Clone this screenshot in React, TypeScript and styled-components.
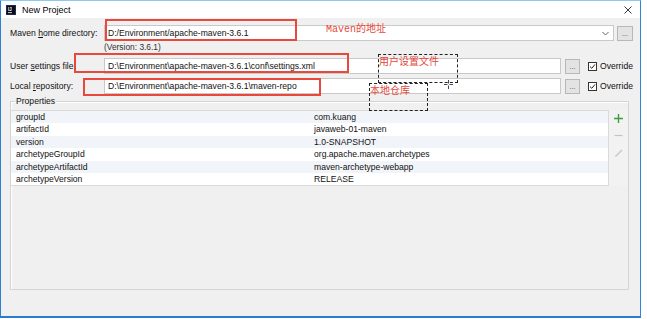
import React from "react";
import styled, { createGlobalStyle } from "styled-components";

const Global = createGlobalStyle`
  html, body { margin: 0; padding: 0; background: #ffffff; }
  body { font-family: "Liberation Sans", Arial, sans-serif; }
  * { box-sizing: border-box; }
`;

const UI = `"Liberation Sans", "Noto Sans CJK SC", Arial, sans-serif`;

const Window = styled.div`
  position: relative;
  width: 641px;
  height: 318px;
  border-left: 1px solid #2f7fd4;
  border-right: 1px solid #2f86d8;
  border-bottom: 2px solid #2a7ccc;
  border-top: 1px solid #8ccaf2;
  display: flex;
  flex-direction: column;
  background: #f0f0f0;
  font-family: ${UI};
  font-size: 8.6px;
  color: #111;
`;

const TitleBar = styled.div`
  height: 17px;
  flex: none;
  background: #ffffff;
  display: flex;
  align-items: center;
  padding: 0 8px 0 5px;
  gap: 6px;
`;

const TitleText = styled.span`
  font-size: 9px;
  color: #000;
  flex: 1;
`;

const CloseGlyph = styled.svg`
  width: 8px;
  height: 8px;
`;

const Body = styled.div`
  flex: 1;
  display: flex;
  flex-direction: column;
  padding: 7px 7px 0 9px;
`;

const FieldRow = styled.div<{ $h?: number; $mb?: number }>`
  display: grid;
  grid-template-columns: 94px 1fr;
  align-items: center;
  height: ${(p) => p.$h ?? 16}px;
  margin-bottom: ${(p) => p.$mb ?? 0}px;
`;

const Label = styled.span`
  white-space: nowrap;
  color: #111;
`;

const U = styled.span`
  text-decoration: underline;
`;

const Controls = styled.div`
  display: flex;
  align-items: center;
  height: 16px;
`;

const Input = styled.div<{ $w?: number }>`
  height: 16px;
  ${(p) => (p.$w ? `width: ${p.$w}px;` : "flex: 1;")}
  background: #fff;
  border: 1px solid #c9c9c9;
  display: flex;
  align-items: center;
  padding: 0 3px;
  white-space: nowrap;
  overflow: hidden;
  color: #111;
`;

const InputText = styled.span`
  flex: 1;
`;

const Chevron = styled.svg`
  width: 7px;
  height: 5px;
  flex: none;
  margin-right: 1px;
`;

const DotsButton = styled.div<{ $ml: number; $w: number }>`
  margin-left: ${(p) => p.$ml}px;
  width: ${(p) => p.$w}px;
  height: 15px;
  background: #e3e3e3;
  border: 1px solid #b8b8b8;
  display: flex;
  align-items: flex-end;
  justify-content: center;
  padding-bottom: 3px;
  font-size: 7px;
  line-height: 7px;
  color: #444;
  flex: none;
`;

const Check = styled.div`
  margin-left: 8px;
  display: flex;
  align-items: center;
  gap: 3px;
  flex: none;
`;

const Box = styled.svg`
  width: 9px;
  height: 9px;
`;

const Version = styled.span`
  grid-column: 2;
  color: #333;
  font-size: 8.4px;
  line-height: 12px;
  align-self: start;
`;

const Group = styled.fieldset`
  position: relative;
  margin: 7px 4px 0 0;
  height: 189px;
  border: 1px solid #d4d4d4;
  box-shadow: inset 1px 1px 0 #fff;
  padding: 8px 0 1px 0;
  display: flex;
  min-width: 0;
`;

const Legend = styled.span`
  position: absolute;
  left: 4px;
  top: -6px;
  background: #f0f0f0;
  padding: 0 1px;
  line-height: 11px;
  color: #111;
`;

const Table = styled.div`
  flex: 1;
  background: #fff;
  border: 1px solid #dadada;
  border-left: none;
  display: flex;
  flex-direction: column;
`;

const TRow = styled.div<{ $alt: boolean }>`
  display: grid;
  grid-template-columns: 298px 1fr;
  height: 12.4px;
  line-height: 12.4px;
  padding-left: 5px;
  background: ${(p) => (p.$alt ? "#f1f5fa" : "#ffffff")};
  color: #111;
  white-space: nowrap;
`;

const SideBar = styled.div`
  width: 19px;
  flex: none;
  background: #f2f2f2;
  display: flex;
  flex-direction: column;
  align-items: center;
  padding-top: 3px;
  gap: 6px;
`;

const ToolIcon = styled.svg`
  width: 11px;
  height: 11px;
`;

/* annotation overlays */
const RedBox = styled.div<{ $x: number; $y: number; $w: number; $h: number }>`
  position: absolute;
  left: ${(p) => p.$x}px;
  top: ${(p) => p.$y}px;
  width: ${(p) => p.$w}px;
  height: ${(p) => p.$h}px;
  border: 2px solid #e9493c;
  pointer-events: none;
`;

const Note = styled.span<{ $x: number; $y: number; $mono?: boolean }>`
  position: absolute;
  left: ${(p) => p.$x}px;
  top: ${(p) => p.$y}px;
  font-family: ${(p) =>
    p.$mono
      ? `"Liberation Mono", "Noto Sans CJK SC", monospace`
      : `"Noto Sans CJK SC", sans-serif`};
  font-size: 10px;
  line-height: 12px;
  color: #e4473b;
  white-space: nowrap;
`;

const DashBox = styled.div<{ $x: number; $y: number; $w: number; $h: number }>`
  position: absolute;
  left: ${(p) => p.$x}px;
  top: ${(p) => p.$y}px;
  width: ${(p) => p.$w}px;
  height: ${(p) => p.$h}px;
  border: 1px dashed #222;
`;

const Cross = styled.svg`
  position: absolute;
  left: 443px;
  top: 79px;
  width: 9px;
  height: 9px;
`;

const rows: [string, string][] = [
  ["groupId", "com.kuang"],
  ["artifactId", "javaweb-01-maven"],
  ["version", "1.0-SNAPSHOT"],
  ["archetypeGroupId", "org.apache.maven.archetypes"],
  ["archetypeArtifactId", "maven-archetype-webapp"],
  ["archetypeVersion", "RELEASE"],
];

const Override = () => (
  <Check>
    <Box viewBox="0 0 9 9">
      <rect x="0.5" y="0.5" width="8" height="8" fill="#fff" stroke="#333" />
      <path d="M2 4.6 L3.8 6.3 L7 2.4" fill="none" stroke="#222" strokeWidth="1" />
    </Box>
    <span>Override</span>
  </Check>
);

export default function App() {
  return (
    <>
      <Global />
      <Window>
        <TitleBar>
          <svg width="10" height="10" viewBox="0 0 10 10">
            <rect width="10" height="10" fill="#1b2a5a" />
            <rect x="1" y="1" width="8" height="8" fill="#0b0b14" />
            <text x="2" y="6" fontSize="4.5" fill="#fff" fontFamily="Liberation Sans" fontWeight="bold">IJ</text>
            <rect x="2" y="7.3" width="4" height="0.8" fill="#fff" />
          </svg>
          <TitleText>New Project</TitleText>
          <CloseGlyph viewBox="0 0 8 8">
            <path d="M0.5 0.5 L7.5 7.5 M7.5 0.5 L0.5 7.5" stroke="#222" strokeWidth="0.9" />
          </CloseGlyph>
        </TitleBar>
        <Body>
          <FieldRow>
            <Label>
              Maven <U>h</U>ome directory:
            </Label>
            <Controls>
              <Input>
                <InputText>D:/Environment/apache-maven-3.6.1</InputText>
                <Chevron viewBox="0 0 7 5">
                  <path d="M0.5 1 L3.5 4 L6.5 1" fill="none" stroke="#555" strokeWidth="0.9" />
                </Chevron>
              </Input>
              <DotsButton $ml={3} $w={16}>...</DotsButton>
            </Controls>
          </FieldRow>
          <FieldRow $h={17}>
            <Version>(Version: 3.6.1)</Version>
          </FieldRow>
          <FieldRow $mb={4}>
            <Label>
              User <U>s</U>ettings file:
            </Label>
            <Controls>
              <Input $w={457}>D:\Environment\apache-maven-3.6.1\conf\settings.xml</Input>
              <DotsButton $ml={4} $w={15}>...</DotsButton>
              <Override />
            </Controls>
          </FieldRow>
          <FieldRow>
            <Label>
              Local <U>r</U>epository:
            </Label>
            <Controls>
              <Input $w={457}>D:\Environment\apache-maven-3.6.1\maven-repo</Input>
              <DotsButton $ml={4} $w={15}>...</DotsButton>
              <Override />
            </Controls>
          </FieldRow>
          <Group>
            <Legend>Properties</Legend>
            <Table>
              {rows.map(([k, v], i) => (
                <TRow key={k} $alt={i % 2 === 0}>
                  <span>{k}</span>
                  <span>{v}</span>
                </TRow>
              ))}
            </Table>
            <SideBar>
              <ToolIcon viewBox="0 0 11 11">
                <path d="M5.5 1 V10 M1 5.5 H10" stroke="#3f9d3f" strokeWidth="1.4" />
              </ToolIcon>
              <ToolIcon viewBox="0 0 11 11">
                <path d="M1.5 5.5 H9.5" stroke="#c4c4c4" strokeWidth="1.2" />
              </ToolIcon>
              <ToolIcon viewBox="0 0 11 11">
                <path d="M2.5 8.5 L8.5 2.5 L9.5 3.5 L3.5 9.5 L2 10 Z" fill="#c8c8c8" />
              </ToolIcon>
            </SideBar>
          </Group>
        </Body>

        <RedBox $x={104} $y={18} $w={192} $h={22} />
        <Note $x={325} $y={23} $mono>Maven的地址</Note>
        <RedBox $x={73} $y={52} $w={275} $h={20} />
        <RedBox $x={82} $y={77} $w={238} $h={18} />
        <DashBox $x={377} $y={53} $w={80} $h={29} />
        <Note $x={378} $y={54}>用户设置文件</Note>
        <DashBox $x={368} $y={82} $w={59} $h={28} />
        <Note $x={369} $y={83}>本地仓库</Note>
        <Cross viewBox="0 0 9 9">
          <path d="M4.5 0 V3.5 M4.5 5.5 V9 M0 4.5 H3.5 M5.5 4.5 H9" stroke="#445" strokeWidth="1" />
        </Cross>
      </Window>
    </>
  );
}
